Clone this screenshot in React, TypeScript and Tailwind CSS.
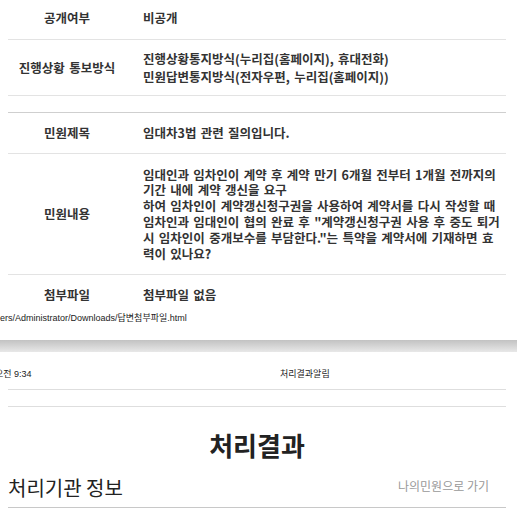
import React from "react";

const ko = { fontFamily: '"Noto Sans CJK KR", "Noto Sans", sans-serif' };
const arial = { fontFamily: '"Liberation Sans", "Noto Sans CJK KR", sans-serif' };

function Row({
  label,
  h,
  extra = "",
  children,
}: {
  label: string;
  h: string;
  extra?: string;
  children: React.ReactNode;
}) {
  return (
    <div className={`flex items-center border-b border-[#e3e3e3] ${h} ${extra}`}>
      <div className="w-[118px] shrink-0 text-center">{label}</div>
      <div className="pl-[17px] whitespace-nowrap">{children}</div>
    </div>
  );
}

export default function App() {
  return (
    <div className="w-[517px] h-[517px] overflow-hidden bg-white text-[#333]">
      <div
        className="ml-2 w-[498px] text-[12.5px] font-bold leading-[18px] [word-spacing:1.5px]"
        style={ko}
      >
        <Row label="공개여부" h="h-[40px]" extra="pb-[3px]">
          비공개
        </Row>
        <Row label="진행상황 통보방식" h="h-[56px]">
          진행상황통지방식(누리집(홈페이지), 휴대전화)
          <br />
          민원답변통지방식(전자우편, 누리집(홈페이지))
        </Row>
        <div className="h-[16px]" />
        <Row label="민원제목" h="h-[42px]" extra="border-t border-t-[#cfcfcf]">
          임대차3법 관련 질의입니다.
        </Row>
        <Row label="민원내용" h="h-[121px]">
          <div className="leading-[15.8px]">
            임대인과 임차인이 계약 후 계약 만기 6개월 전부터 1개월 전까지의
            <br />
            기간 내에 계약 갱신을 요구
            <br />
            하여 임차인이 계약갱신청구권을 사용하여 계약서를 다시 작성할 때
            <br />
            임차인과 임대인이 협의 완료 후 "계약갱신청구권 사용 후 중도 퇴거
            <br />
            시 임차인이 중개보수를 부담한다."는 특약을 계약서에 기재하면 효
            <br />
            력이 있나요?
          </div>
        </Row>
        <div className="flex items-center h-[37px] pt-[3px]">
          <div className="w-[118px] shrink-0 text-center">첨부파일</div>
          <div className="pl-[17px]">첨부파일 없음</div>
        </div>
      </div>

      <div className="h-[12px] text-[9px] leading-[12px] text-[#222] whitespace-nowrap" style={arial}>
        ers/Administrator/Downloads/답변첨부파일.html
      </div>
      <div className="h-[16px]" />
      <div className="h-[12px] bg-gradient-to-b from-[#c2c2c2] to-[#e8e8e8]" />

      <div
        className="h-[37px] pt-[9px] flex items-center text-[9px] text-[#222] whitespace-nowrap"
        style={arial}
      >
        <span className="w-[285px] -ml-[5px] shrink-0">오전 9:34</span>
        <span>처리결과알림</span>
      </div>
      <div className="ml-2 w-[498px] h-px bg-[#dedede]" />
      <div className="h-[16px]" />
      <div className="ml-2 w-[498px] h-px bg-[#dedede]" />

      <div className="ml-2 w-[498px]" style={ko}>
        <div className="mt-[21px] text-center text-[26px] leading-[34px] font-bold text-[#222]">
          처리결과
        </div>
        <div className="h-[46px] flex items-end justify-between border-b border-[#c8c8c8] pb-[6px]">
          <div className="text-[20px] leading-[26px] text-[#222]">처리기관 정보</div>
          <div className="text-[12px] leading-[26px] text-[#999] pr-[17px] mb-[2px]">
            나의민원으로 가기
          </div>
        </div>
      </div>
    </div>
  );
}
